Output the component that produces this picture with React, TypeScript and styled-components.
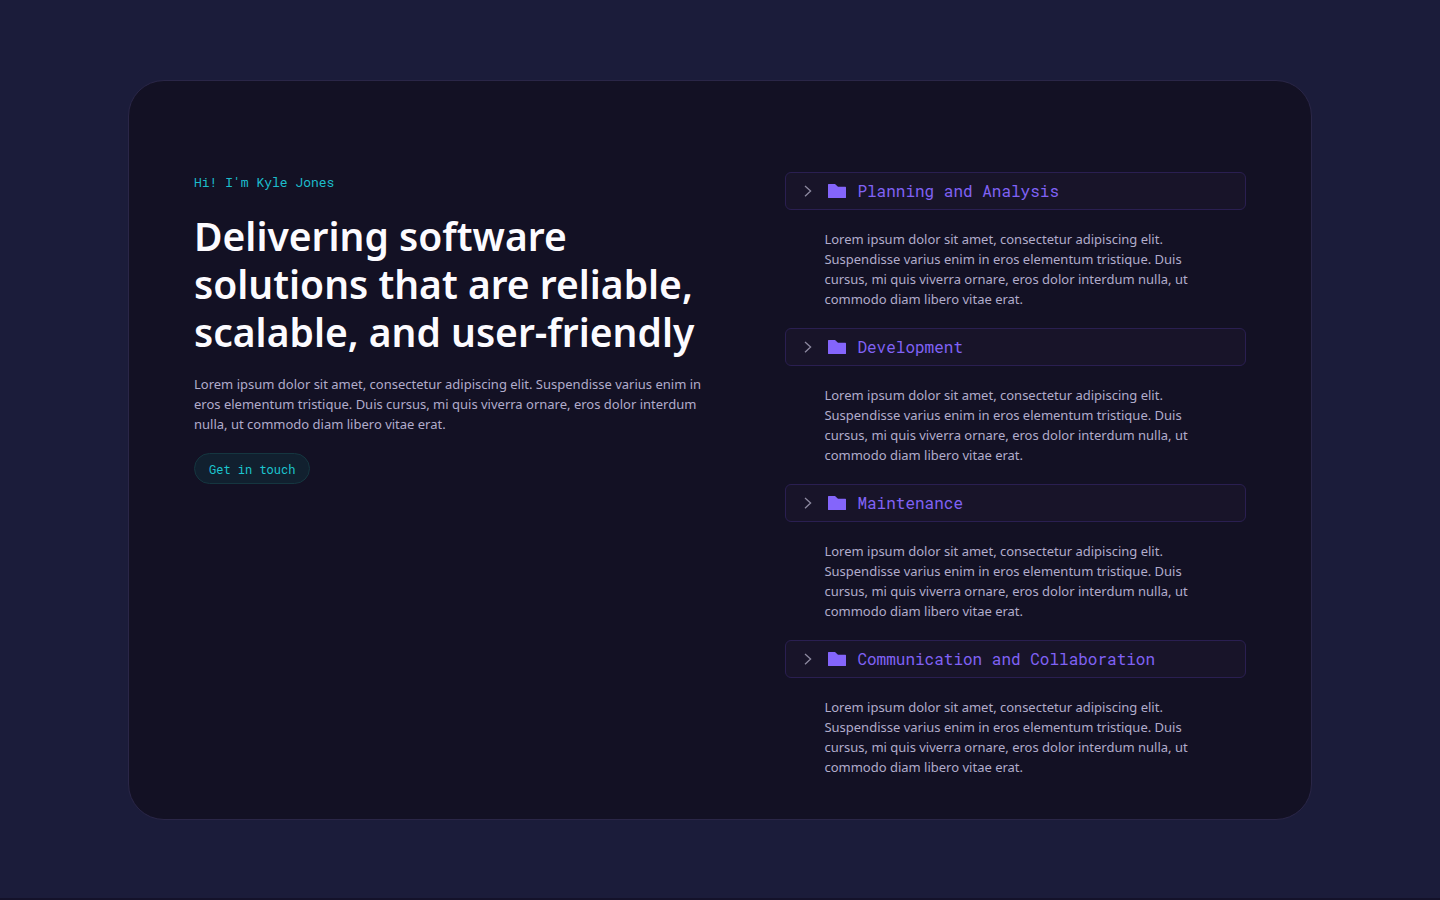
import { useState } from "react";
import styled, { createGlobalStyle } from "styled-components";

const sans = `"Noto Sans", "Open Sans", sans-serif`;
const mono = `"Roboto Mono", "DejaVu Sans Mono", "Liberation Mono", monospace`;

const GlobalStyle = createGlobalStyle`
  *, *::before, *::after { box-sizing: border-box; }
  body { margin: 0; background: #1b1c3a; font-family: ${sans}; }
  h1, h2, p { margin: 0; }
`;

const Page = styled.main`
  min-height: 100vh;
  padding: 80px 128px 78px;
  border-bottom: 2px solid #14122a;
`;

const Card = styled.section`
  display: grid;
  grid-template-columns: 8fr 7fr;
  gap: 65px;
  align-items: start;
  padding: 91px 65px 23px;
  background: #131124;
  border: 1px solid #2a2647;
  border-radius: 36px;
`;

const Intro = styled.div`
  display: flex;
  flex-direction: column;
  align-items: flex-start;
`;

const Greeting = styled.p`
  color: #1cbccb;
  font: 13px/20px ${mono};
`;

const Title = styled.h1`
  margin-top: 20px;
  color: #fcfbff;
  font-size: 39px;
  font-weight: 600;
  line-height: 48px;
`;

const Copy = styled.p`
  color: #b1accb;
  font-size: 13px;
  line-height: 20px;
`;

const IntroCopy = styled(Copy)`
  margin: 18px 0 19px;
`;

const ContactButton = styled.button`
  height: 31px;
  padding: 0 14px;
  color: #1cc5cf;
  background: #11202f;
  border: 1px solid #153640;
  border-radius: 16px;
  font: 12px/16px ${mono};
  cursor: pointer;
`;

const Services = styled.div`
  display: flex;
  flex-direction: column;
`;

const ServiceHeading = styled.h2`
  font-size: 16px;
`;

const ServiceButton = styled.button`
  display: flex;
  align-items: center;
  width: 100%;
  height: 38px;
  padding: 0 16px;
  color: #8062f5;
  background: #181429;
  border: 1px solid #2a1f51;
  border-radius: 6px;
  font: 16px/24px ${mono};
  text-align: left;
  cursor: pointer;
`;

const Chevron = styled.svg`
  flex: none;
  width: 12px;
  height: 14px;
  margin-right: 14px;
`;

const Folder = styled.svg`
  flex: none;
  width: 18px;
  height: 16px;
  margin-right: 11px;
`;

const ServiceCopy = styled(Copy)`
  padding: 19px 39px;
`;

const text =
  "Lorem ipsum dolor sit amet, consectetur adipiscing elit. Suspendisse varius enim in eros elementum tristique. Duis cursus, mi quis viverra ornare, eros dolor interdum nulla, ut commodo diam libero vitae erat.";

const services = [
  { id: "planning", name: "Planning and Analysis" },
  { id: "development", name: "Development" },
  { id: "maintenance", name: "Maintenance" },
  { id: "communication", name: "Communication and Collaboration" },
];

function Service({ id, name }: { id: string; name: string }) {
  const [open, setOpen] = useState(true);
  return (
    <section>
      <ServiceHeading>
        <ServiceButton
          type="button"
          aria-expanded={open}
          aria-controls={id}
          onClick={() => setOpen(!open)}
        >
          <Chevron viewBox="0 0 12 14" aria-hidden="true">
            <path d="M3 2 8.6 7 3 12.2" fill="none" stroke="#8d89a0" strokeWidth="1.3" />
          </Chevron>
          <Folder viewBox="0 0 18 16" aria-hidden="true">
            <path d="M0 1.6Q0 1 .6 1H7L10 3.8H17.4Q18 3.8 18 4.4V14.4Q18 15 17.4 15H.6Q0 15 0 14.4Z" fill="#8465fb" />
          </Folder>
          {name}
        </ServiceButton>
      </ServiceHeading>
      <ServiceCopy id={id} hidden={!open}>
        {text}
      </ServiceCopy>
    </section>
  );
}

export default function App() {
  return (
    <>
      <GlobalStyle />
      <Page>
        <Card>
          <Intro>
            <Greeting>Hi! I'm Kyle Jones</Greeting>
            <Title>Delivering software solutions that are reliable, scalable, and user-friendly</Title>
            <IntroCopy>{text}</IntroCopy>
            <ContactButton type="button">Get in touch</ContactButton>
          </Intro>
          <Services>
            {services.map((service) => (
              <Service key={service.id} {...service} />
            ))}
          </Services>
        </Card>
      </Page>
    </>
  );
}
